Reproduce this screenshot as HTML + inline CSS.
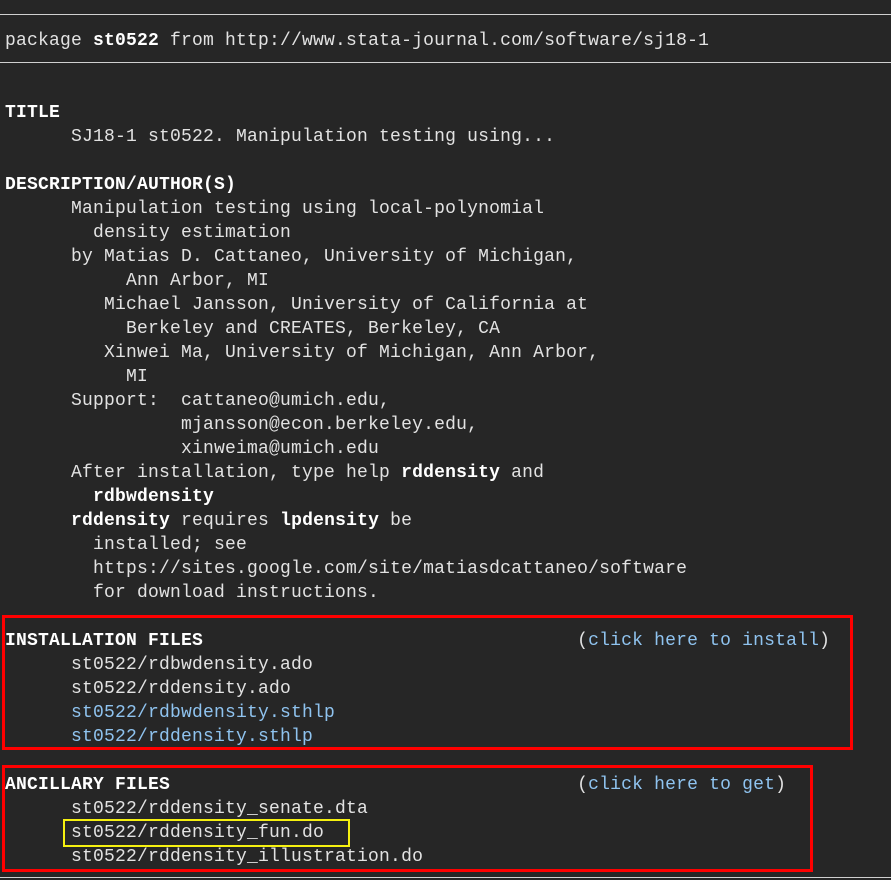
<!DOCTYPE html>
<html><head><meta charset="utf-8"><style>
html,body{margin:0;padding:0;width:891px;height:880px;background:#262626;overflow:hidden}
pre{position:absolute;left:5px;top:29px;margin:0;font-family:"Liberation Mono",monospace;font-size:18px;letter-spacing:0.2px;line-height:24px;color:#e2e2e2}
b{color:#fff}
.l{color:#8fc3ef}
.p{color:#e2e2e2}
.rule{position:absolute;left:0;width:891px;height:1px;background:#d0d0d0}
.box{position:absolute;box-sizing:border-box;border:3px solid #f00}
.yb{position:absolute;box-sizing:border-box;border:2px solid #f5f010}
</style></head><body>
<div class="rule" style="top:14px"></div>
<div class="rule" style="top:62px"></div>
<div class="rule" style="top:877px"></div>
<pre>package <b>st0522</b> from http://www.stata-journal.com/software/sj18-1


<b>TITLE</b>
      SJ18-1 st0522. Manipulation testing using...

<b>DESCRIPTION/AUTHOR(S)</b>
      Manipulation testing using local-polynomial
        density estimation
      by Matias D. Cattaneo, University of Michigan,
           Ann Arbor, MI
         Michael Jansson, University of California at
           Berkeley and CREATES, Berkeley, CA
         Xinwei Ma, University of Michigan, Ann Arbor,
           MI
      Support:  cattaneo@umich.edu,
                mjansson@econ.berkeley.edu,
                xinweima@umich.edu
      After installation, type help <b>rddensity</b> and
        <b>rdbwdensity</b>
      <b>rddensity</b> requires <b>lpdensity</b> be
        installed; see
        https://sites.google.com/site/matiasdcattaneo/software
        for download instructions.

<b>INSTALLATION FILES</b>                                  <span class="p">(</span><span class="l">click here to install</span><span class="p">)</span>
      st0522/rdbwdensity.ado
      st0522/rddensity.ado
      <span class="l">st0522/rdbwdensity.sthlp</span>
      <span class="l">st0522/rddensity.sthlp</span>

<b>ANCILLARY FILES</b>                                     <span class="p">(</span><span class="l">click here to get</span><span class="p">)</span>
      st0522/rddensity_senate.dta
      st0522/rddensity_fun.do
      st0522/rddensity_illustration.do</pre>
<div class="box" style="left:2px;top:615px;width:851px;height:135px"></div>
<div class="box" style="left:2px;top:765px;width:811px;height:107px"></div>
<div class="yb" style="left:63px;top:819px;width:287px;height:28px"></div>
</body></html>
